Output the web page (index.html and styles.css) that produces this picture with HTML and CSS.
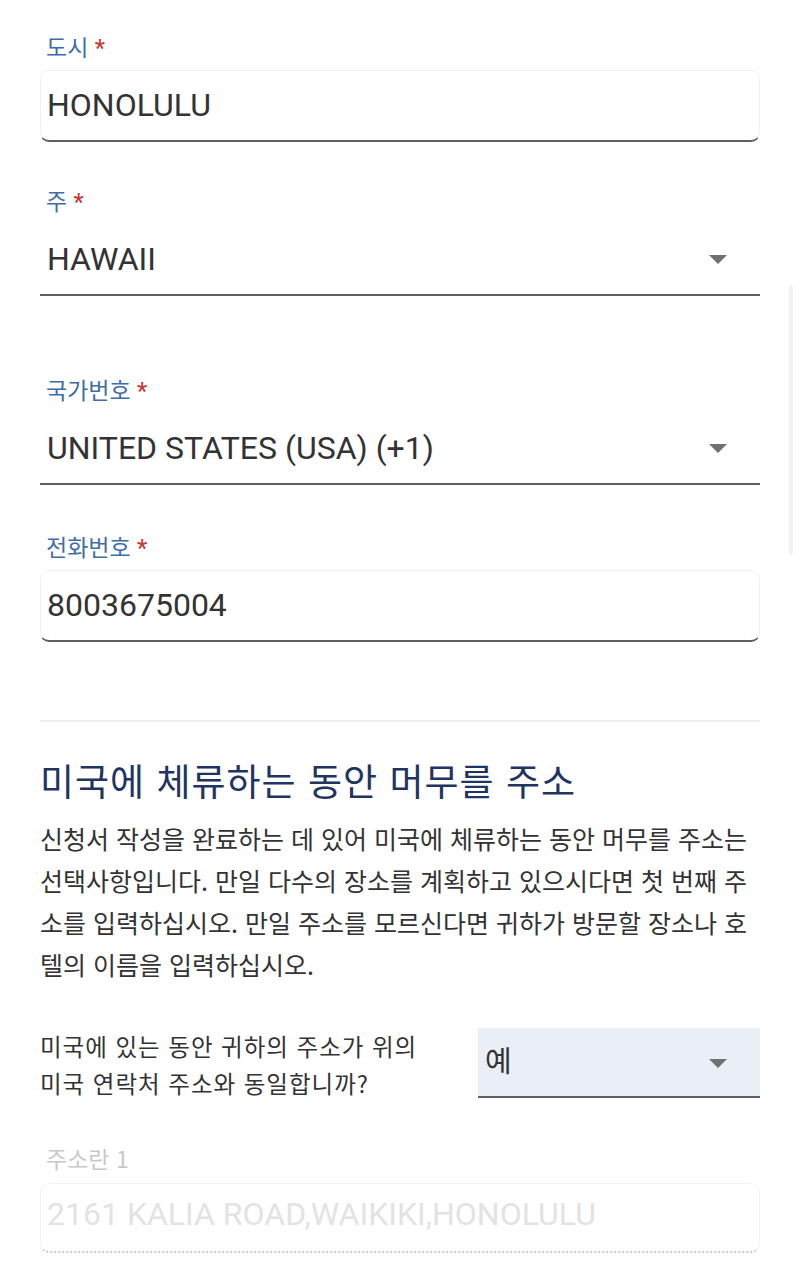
FILE: index.html
```html
<!DOCTYPE html>
<html lang="ko">
<head>
<meta charset="utf-8">
<title>주소</title>
<link rel="stylesheet" href="styles.css">
</head>
<body>
<div class="page">
  <div class="field">
    <div class="label">도시 <span class="req">*</span></div>
    <div class="input"><span class="value">HONOLULU</span></div>
  </div>
  <div class="field">
    <div class="label">주 <span class="req">*</span></div>
    <div class="select"><span class="value">HAWAII</span><span class="arrow"></span></div>
  </div>
  <div class="field field-wide">
    <div class="label">국가번호 <span class="req">*</span></div>
    <div class="select"><span class="value">UNITED STATES (USA) (+1)</span><span class="arrow"></span></div>
  </div>
  <div class="field">
    <div class="label">전화번호 <span class="req">*</span></div>
    <div class="input"><span class="value">8003675004</span></div>
  </div>

  <hr class="divider">

  <h2 class="heading">미국에 체류하는 동안 머무를 주소</h2>
  <p class="desc">신청서 작성을 완료하는 데 있어 미국에 체류하는 동안 머무를 주소는 선택사항입니다. 만일 다수의 장소를 계획하고 있으시다면 첫 번째 주소를 입력하십시오. 만일 주소를 모르신다면 귀하가 방문할 장소나 호텔의 이름을 입력하십시오.</p>

  <div class="question-row">
    <div class="question">미국에 있는 동안 귀하의 주소가 위의 미국 연락처 주소와 동일합니까?</div>
    <div class="select select-filled"><span class="value">예</span><span class="arrow"></span></div>
  </div>

  <div class="field field-disabled">
    <div class="label">주소란 1</div>
    <div class="input input-disabled"><span class="value">2161 KALIA ROAD,WAIKIKI,HONOLULU</span></div>
  </div>
</div>
<div class="scroll-indicator"></div>
</body>
</html>
```

FILE: styles.css
```css
html, body {
  margin: 0;
  padding: 0;
  background: #ffffff;
}
body {
  font-family: Roboto, "Noto Sans CJK KR", sans-serif;
  color: #333333;
  position: relative;
  min-height: 1277px;
}
.page {
  padding: 31px 40px 0 40px;
}
.field {
  margin-bottom: 43px;
}
.field-wide {
  margin-top: 78px;
  margin-bottom: 46px;
}
.label {
  font-family: "Noto Sans CJK KR", Roboto, sans-serif;
  font-size: 23px;
  line-height: 30px;
  height: 30px;
  color: #3f6da6;
  padding-left: 6px;
  margin-bottom: 9px;
}
.req {
  color: #c63a32;
  font-family: Roboto, sans-serif;
  font-weight: 500;
}
.input {
  box-sizing: border-box;
  height: 72px;
  border: 1px solid #f1f1f1;
  border-bottom: 2px solid #5f5f5f;
  border-radius: 9px;
  display: flex;
  align-items: center;
  padding: 0 7px 2px 6px;
}
.value {
  font-size: 32px;
  color: #333333;
}
.select {
  box-sizing: border-box;
  height: 72px;
  border-bottom: 2px solid #5f5f5f;
  display: flex;
  align-items: center;
  justify-content: space-between;
  padding: 0 33px 0 7px;
}
.arrow {
  width: 0;
  height: 0;
  border-left: 9px solid transparent;
  border-right: 9px solid transparent;
  border-top: 9px solid #707070;
}
.divider {
  border: 0;
  height: 2px;
  background: #efefef;
  margin: 78px 0 0 0;
}
.heading {
  font-family: "Noto Sans CJK KR", sans-serif;
  font-weight: 400;
  font-size: 37px;
  line-height: 48px;
  letter-spacing: 1px;
  color: #1f3461;
  margin: 34px 0 13px 0;
}
.desc {
  font-family: "Noto Sans CJK KR", sans-serif;
  font-size: 25px;
  line-height: 42px;
  color: #333333;
  margin: 0 0 43px 0;
}
.question-row {
  display: grid;
  grid-template-columns: 1fr 282px;
  column-gap: 18px;
  align-items: start;
  margin-bottom: 41px;
}
.question {
  font-family: "Noto Sans CJK KR", sans-serif;
  font-size: 23.5px;
  line-height: 37px;
  letter-spacing: 1px;
  color: #333333;
  max-width: 400px;
  word-break: keep-all;
}
.select-filled {
  height: 70px;
  background: #e9eef7;
  padding-bottom: 6px;
}
.select-filled .value {
  font-family: "Noto Sans CJK KR", sans-serif;
  font-size: 29px;
}
.select-filled .arrow {
  margin-top: 8px;
}
.field-disabled .label {
  color: #c9c9c9;
  margin-bottom: 10px;
}
.input-disabled {
  height: 70px;
  border-color: #f3f3f3;
  border-bottom: 2px dotted #c8c8c8;
  padding-bottom: 8px;
}
.input-disabled .value {
  color: #e3e3e3;
}
.scroll-indicator {
  position: absolute;
  left: 789px;
  top: 285px;
  width: 4px;
  height: 270px;
  border-radius: 2px;
  background: #f3f3f3;
}
```
